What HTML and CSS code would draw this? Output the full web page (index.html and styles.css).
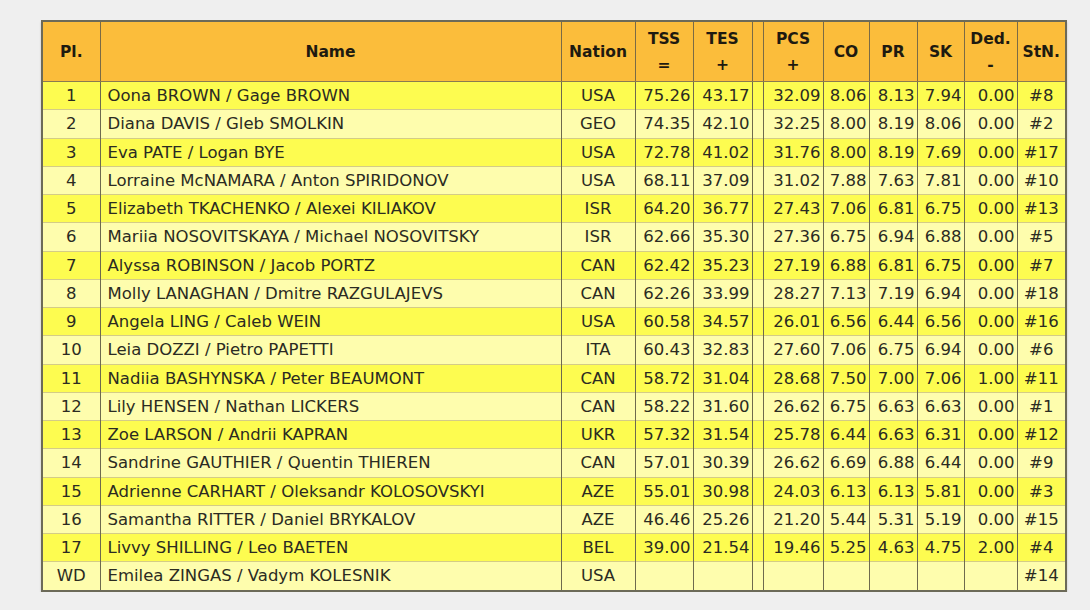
FILE: index.html
```html
<!DOCTYPE html>
<html>
<head>
<meta charset="utf-8">
<link rel="stylesheet" href="styles.css">
</head>
<body>
<div class="page">
<table class="results">
<colgroup>
<col class="c-pl"><col class="c-name"><col class="c-nat"><col class="c-tss"><col class="c-tes"><col class="c-gap"><col class="c-pcs"><col class="c-co"><col class="c-pr"><col class="c-sk"><col class="c-ded"><col class="c-stn">
</colgroup>
<thead>
<tr>
<th>Pl.</th><th>Name</th><th>Nation</th><th>TSS<br>=</th><th>TES<br>+</th><th></th><th>PCS<br>+</th><th>CO</th><th>PR</th><th>SK</th><th>Ded.<br>-</th><th>StN.</th>
</tr>
</thead>
<tbody>
<tr><td class="ctr">1</td><td class="nm">Oona BROWN / Gage BROWN</td><td class="ctr">USA</td><td>75.26</td><td>43.17</td><td></td><td>32.09</td><td>8.06</td><td>8.13</td><td>7.94</td><td>0.00</td><td class="ctr">#8</td></tr>
<tr><td class="ctr">2</td><td class="nm">Diana DAVIS / Gleb SMOLKIN</td><td class="ctr">GEO</td><td>74.35</td><td>42.10</td><td></td><td>32.25</td><td>8.00</td><td>8.19</td><td>8.06</td><td>0.00</td><td class="ctr">#2</td></tr>
<tr><td class="ctr">3</td><td class="nm">Eva PATE / Logan BYE</td><td class="ctr">USA</td><td>72.78</td><td>41.02</td><td></td><td>31.76</td><td>8.00</td><td>8.19</td><td>7.69</td><td>0.00</td><td class="ctr">#17</td></tr>
<tr><td class="ctr">4</td><td class="nm">Lorraine McNAMARA / Anton SPIRIDONOV</td><td class="ctr">USA</td><td>68.11</td><td>37.09</td><td></td><td>31.02</td><td>7.88</td><td>7.63</td><td>7.81</td><td>0.00</td><td class="ctr">#10</td></tr>
<tr><td class="ctr">5</td><td class="nm">Elizabeth TKACHENKO / Alexei KILIAKOV</td><td class="ctr">ISR</td><td>64.20</td><td>36.77</td><td></td><td>27.43</td><td>7.06</td><td>6.81</td><td>6.75</td><td>0.00</td><td class="ctr">#13</td></tr>
<tr><td class="ctr">6</td><td class="nm">Mariia NOSOVITSKAYA / Michael NOSOVITSKY</td><td class="ctr">ISR</td><td>62.66</td><td>35.30</td><td></td><td>27.36</td><td>6.75</td><td>6.94</td><td>6.88</td><td>0.00</td><td class="ctr">#5</td></tr>
<tr><td class="ctr">7</td><td class="nm">Alyssa ROBINSON / Jacob PORTZ</td><td class="ctr">CAN</td><td>62.42</td><td>35.23</td><td></td><td>27.19</td><td>6.88</td><td>6.81</td><td>6.75</td><td>0.00</td><td class="ctr">#7</td></tr>
<tr><td class="ctr">8</td><td class="nm">Molly LANAGHAN / Dmitre RAZGULAJEVS</td><td class="ctr">CAN</td><td>62.26</td><td>33.99</td><td></td><td>28.27</td><td>7.13</td><td>7.19</td><td>6.94</td><td>0.00</td><td class="ctr">#18</td></tr>
<tr><td class="ctr">9</td><td class="nm">Angela LING / Caleb WEIN</td><td class="ctr">USA</td><td>60.58</td><td>34.57</td><td></td><td>26.01</td><td>6.56</td><td>6.44</td><td>6.56</td><td>0.00</td><td class="ctr">#16</td></tr>
<tr><td class="ctr">10</td><td class="nm">Leia DOZZI / Pietro PAPETTI</td><td class="ctr">ITA</td><td>60.43</td><td>32.83</td><td></td><td>27.60</td><td>7.06</td><td>6.75</td><td>6.94</td><td>0.00</td><td class="ctr">#6</td></tr>
<tr><td class="ctr">11</td><td class="nm">Nadiia BASHYNSKA / Peter BEAUMONT</td><td class="ctr">CAN</td><td>58.72</td><td>31.04</td><td></td><td>28.68</td><td>7.50</td><td>7.00</td><td>7.06</td><td>1.00</td><td class="ctr">#11</td></tr>
<tr><td class="ctr">12</td><td class="nm">Lily HENSEN / Nathan LICKERS</td><td class="ctr">CAN</td><td>58.22</td><td>31.60</td><td></td><td>26.62</td><td>6.75</td><td>6.63</td><td>6.63</td><td>0.00</td><td class="ctr">#1</td></tr>
<tr><td class="ctr">13</td><td class="nm">Zoe LARSON / Andrii KAPRAN</td><td class="ctr">UKR</td><td>57.32</td><td>31.54</td><td></td><td>25.78</td><td>6.44</td><td>6.63</td><td>6.31</td><td>0.00</td><td class="ctr">#12</td></tr>
<tr><td class="ctr">14</td><td class="nm">Sandrine GAUTHIER / Quentin THIEREN</td><td class="ctr">CAN</td><td>57.01</td><td>30.39</td><td></td><td>26.62</td><td>6.69</td><td>6.88</td><td>6.44</td><td>0.00</td><td class="ctr">#9</td></tr>
<tr><td class="ctr">15</td><td class="nm">Adrienne CARHART / Oleksandr KOLOSOVSKYI</td><td class="ctr">AZE</td><td>55.01</td><td>30.98</td><td></td><td>24.03</td><td>6.13</td><td>6.13</td><td>5.81</td><td>0.00</td><td class="ctr">#3</td></tr>
<tr><td class="ctr">16</td><td class="nm">Samantha RITTER / Daniel BRYKALOV</td><td class="ctr">AZE</td><td>46.46</td><td>25.26</td><td></td><td>21.20</td><td>5.44</td><td>5.31</td><td>5.19</td><td>0.00</td><td class="ctr">#15</td></tr>
<tr><td class="ctr">17</td><td class="nm">Livvy SHILLING / Leo BAETEN</td><td class="ctr">BEL</td><td>39.00</td><td>21.54</td><td></td><td>19.46</td><td>5.25</td><td>4.63</td><td>4.75</td><td>2.00</td><td class="ctr">#4</td></tr>
<tr><td class="ctr">WD</td><td class="nm">Emilea ZINGAS / Vadym KOLESNIK</td><td class="ctr">USA</td><td></td><td></td><td></td><td></td><td></td><td></td><td></td><td></td><td class="ctr">#14</td></tr>
</tbody>
</table>
</div>
</body>
</html>
```
FILE: styles.css
```css
html, body {
  margin: 0;
  padding: 0;
  background: #efefef;
}
.page {
  padding: 20px 0 0 41px;
}
.results {
  border-collapse: collapse;
  table-layout: fixed;
  width: 1026px;
  font-family: "DejaVu Sans", Verdana, sans-serif;
  font-size: 16.5px;
  color: #2b2b22;
  border: 2px solid #6c6a58;
  box-shadow: 0 2px 2px rgba(0,0,0,0.18);
}
.c-pl { width: 58px; }
.c-name { width: 461px; }
.c-nat { width: 74px; }
.c-tss { width: 58px; }
.c-tes { width: 59px; }
.c-gap { width: 11px; }
.c-pcs { width: 60px; }
.c-co { width: 46px; }
.c-pr { width: 48px; }
.c-sk { width: 47px; }
.c-ded { width: 53px; }
.c-stn { width: 49px; }
.results th {
  background: #fbbd3b;
  height: 59px;
  padding: 0;
  font-size: 15.5px;
  font-weight: bold;
  line-height: 26px;
  color: #1e1a10;
  text-align: center;
  border-left: 1px solid #7a6a45;
  border-right: 1px solid #7a6a45;
  border-bottom: 1px solid #8a7a50;
}
.results td {
  height: 27.25px;
  padding: 0 2px 0 0;
  text-align: right;
  border-left: 1px solid #6e6a4e;
  border-right: 1px solid #6e6a4e;
  border-top: 1px solid #d4cc86;
  white-space: nowrap;
  overflow: hidden;
}
.results tbody tr:nth-child(odd) td { background: #fdfc50; }
.results tbody tr:nth-child(even) td { background: #fefdad; }
.results td.ctr { text-align: center; padding: 0; }
.results td.nm { text-align: left; padding-left: 7px; }
```
